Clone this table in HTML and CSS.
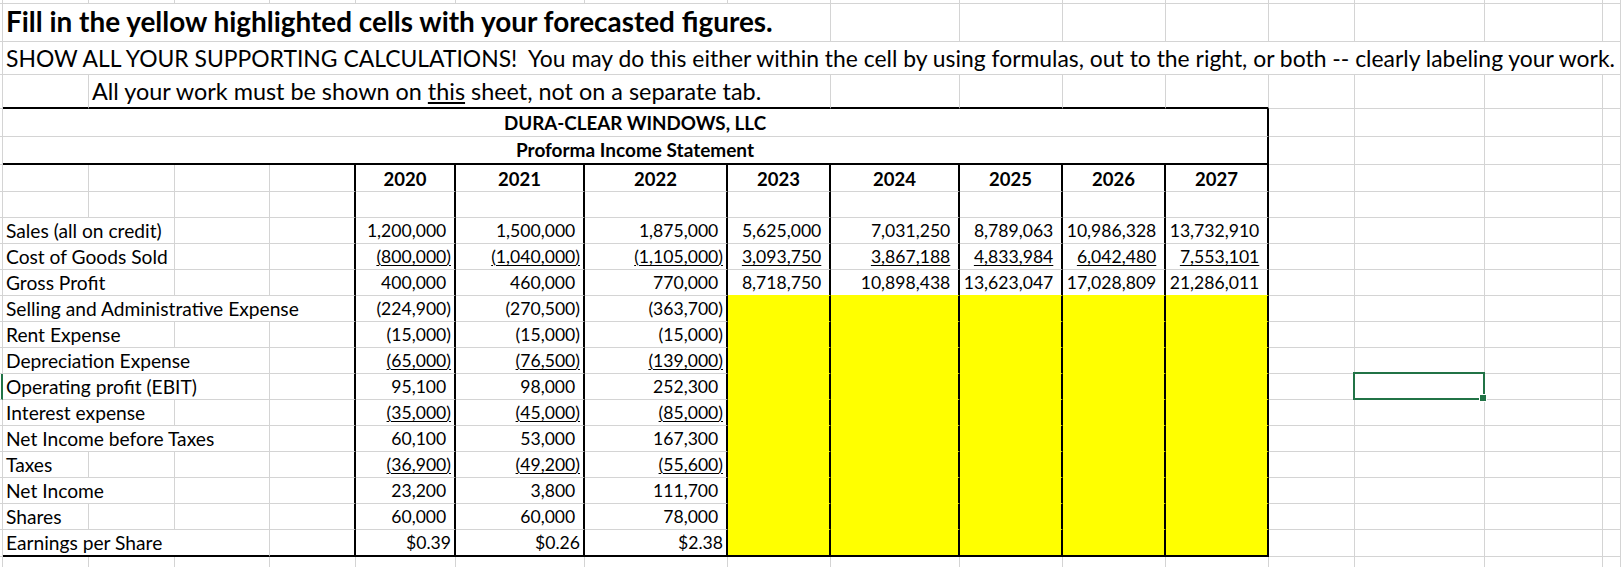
FILE: index.html
```html
<!DOCTYPE html>
<html lang="en">
<head>
<meta charset="utf-8">
<title>Dura-Clear Windows – Proforma Income Statement</title>
<link rel="stylesheet" href="styles.css">
</head>
<body>
<div class="sheet">
  <!-- row 0 (sliver) -->
  <div class="c pre"></div><div class="c"></div><div class="c"></div><div class="c"></div><div class="c"></div><div class="c"></div><div class="c"></div><div class="c"></div><div class="c"></div><div class="c"></div><div class="c"></div><div class="c"></div><div class="c"></div><div class="c"></div><div class="c"></div><div class="c"></div><div class="c"></div>

  <!-- row 1 -->
  <div class="c pre"></div>
  <div class="c s8 title"><span>Fill in the yellow highlighted cells with your forecasted figures.</span></div>
  <div class="c"></div><div class="c"></div><div class="c"></div><div class="c"></div><div class="c"></div><div class="c"></div><div class="c"></div><div class="c"></div>

  <!-- row 2 -->
  <div class="c pre"></div>
  <div class="c s16 note"><span>SHOW ALL YOUR SUPPORTING CALCULATIONS!&nbsp; You may do this either within the cell by using formulas, out to the right, or both -- clearly labeling your work.</span></div>

  <!-- row 3 -->
  <div class="c pre"></div>
  <div class="c tb"></div>
  <div class="c s7 tb note note2"><span>All your work must be shown on <span class="u thick">this</span> sheet, not on a separate tab.</span></div>
  <div class="c tb"></div><div class="c tb"></div><div class="c tb"></div><div class="c tb"></div>
  <div class="c"></div><div class="c"></div><div class="c"></div><div class="c"></div>

  <!-- row 4 -->
  <div class="c pre"></div>
  <div class="c s12 tr m co"><span>DURA-CLEAR WINDOWS, LLC</span></div>
  <div class="c"></div><div class="c"></div><div class="c"></div><div class="c"></div>

  <!-- row 5 -->
  <div class="c pre"></div>
  <div class="c s12 tr tb m sub"><span>Proforma Income Statement</span></div>
  <div class="c"></div><div class="c"></div><div class="c"></div><div class="c"></div>

  <!-- row 6: years -->
  <div class="c pre"></div>
  <div class="c"></div><div class="c"></div><div class="c"></div><div class="c tr"></div>
  <div class="c tr m yr"><span>2020</span></div>
  <div class="c tr m yr"><span>2021</span></div>
  <div class="c tr m yr"><span>2022</span></div>
  <div class="c tr m yr"><span>2023</span></div>
  <div class="c tr m yr"><span>2024</span></div>
  <div class="c tr m yr"><span>2025</span></div>
  <div class="c tr m yr"><span>2026</span></div>
  <div class="c tr m yr"><span>2027</span></div>
  <div class="c"></div><div class="c"></div><div class="c"></div><div class="c"></div>

  <!-- row 7: blank -->
  <div class="c pre"></div>
  <div class="c"></div><div class="c"></div><div class="c"></div><div class="c tr"></div>
  <div class="c tr"></div><div class="c tr"></div><div class="c tr"></div><div class="c tr"></div><div class="c tr"></div><div class="c tr"></div><div class="c tr"></div><div class="c tr"></div>
  <div class="c"></div><div class="c"></div><div class="c"></div><div class="c"></div>

  <!-- Sales -->
  <div class="c pre"></div>
  <div class="c s2"><span>Sales (all on credit)</span></div><div class="c"></div><div class="c tr"></div>
  <div class="c tr r p"><span>1,200,000</span></div>
  <div class="c tr r p"><span>1,500,000</span></div>
  <div class="c tr r p"><span>1,875,000</span></div>
  <div class="c tr r p"><span>5,625,000</span></div>
  <div class="c tr r p"><span>7,031,250</span></div>
  <div class="c tr r p"><span>8,789,063</span></div>
  <div class="c tr r p"><span>10,986,328</span></div>
  <div class="c tr r p"><span>13,732,910</span></div>
  <div class="c"></div><div class="c"></div><div class="c"></div><div class="c"></div>

  <!-- Cost of Goods Sold -->
  <div class="c pre"></div>
  <div class="c s2"><span>Cost of Goods Sold</span></div><div class="c"></div><div class="c tr"></div>
  <div class="c tr r"><span class="u">(800,000)</span></div>
  <div class="c tr r"><span class="u">(1,040,000)</span></div>
  <div class="c tr r"><span class="u">(1,105,000)</span></div>
  <div class="c tr r p"><span class="u">3,093,750</span></div>
  <div class="c tr r p"><span class="u">3,867,188</span></div>
  <div class="c tr r p"><span class="u">4,833,984</span></div>
  <div class="c tr r p"><span class="u">6,042,480</span></div>
  <div class="c tr r p"><span class="u">7,553,101</span></div>
  <div class="c"></div><div class="c"></div><div class="c"></div><div class="c"></div>

  <!-- Gross Profit -->
  <div class="c pre"></div>
  <div class="c s2"><span>Gross Profit</span></div><div class="c"></div><div class="c tr"></div>
  <div class="c tr r p"><span>400,000</span></div>
  <div class="c tr r p"><span>460,000</span></div>
  <div class="c tr r p"><span>770,000</span></div>
  <div class="c tr r p yb"><span>8,718,750</span></div>
  <div class="c tr r p yb"><span>10,898,438</span></div>
  <div class="c tr r p yb"><span>13,623,047</span></div>
  <div class="c tr r p yb"><span>17,028,809</span></div>
  <div class="c tr r p yb"><span>21,286,011</span></div>
  <div class="c"></div><div class="c"></div><div class="c"></div><div class="c"></div>

  <!-- Selling and Administrative Expense -->
  <div class="c pre"></div>
  <div class="c s4 tr"><span>Selling and Administrative Expense</span></div>
  <div class="c tr r"><span>(224,900)</span></div>
  <div class="c tr r"><span>(270,500)</span></div>
  <div class="c tr r"><span>(363,700)</span></div>
  <div class="c tr y"></div><div class="c tr y"></div><div class="c tr y"></div><div class="c tr y"></div><div class="c tr y"></div>
  <div class="c"></div><div class="c"></div><div class="c"></div><div class="c"></div>

  <!-- Rent Expense -->
  <div class="c pre"></div>
  <div class="c s2"><span>Rent Expense</span></div><div class="c"></div><div class="c tr"></div>
  <div class="c tr r"><span>(15,000)</span></div>
  <div class="c tr r"><span>(15,000)</span></div>
  <div class="c tr r"><span>(15,000)</span></div>
  <div class="c tr y"></div><div class="c tr y"></div><div class="c tr y"></div><div class="c tr y"></div><div class="c tr y"></div>
  <div class="c"></div><div class="c"></div><div class="c"></div><div class="c"></div>

  <!-- Depreciation Expense -->
  <div class="c pre"></div>
  <div class="c s3"><span>Depreciation Expense</span></div><div class="c tr"></div>
  <div class="c tr r"><span class="u">(65,000)</span></div>
  <div class="c tr r"><span class="u">(76,500)</span></div>
  <div class="c tr r"><span class="u">(139,000)</span></div>
  <div class="c tr y"></div><div class="c tr y"></div><div class="c tr y"></div><div class="c tr y"></div><div class="c tr y"></div>
  <div class="c"></div><div class="c"></div><div class="c"></div><div class="c"></div>

  <!-- Operating profit (EBIT) -->
  <div class="c pre active"></div>
  <div class="c s3"><span>Operating profit (EBIT)</span></div><div class="c tr"></div>
  <div class="c tr r p"><span>95,100</span></div>
  <div class="c tr r p"><span>98,000</span></div>
  <div class="c tr r p"><span>252,300</span></div>
  <div class="c tr y"></div><div class="c tr y"></div><div class="c tr y"></div><div class="c tr y"></div><div class="c tr y"></div>
  <div class="c"></div>
  <div class="c selcell"><div class="sel"></div><div class="handle"></div></div>
  <div class="c"></div><div class="c"></div>

  <!-- Interest expense -->
  <div class="c pre"></div>
  <div class="c s2"><span>Interest expense</span></div><div class="c"></div><div class="c tr"></div>
  <div class="c tr r"><span class="u">(35,000)</span></div>
  <div class="c tr r"><span class="u">(45,000)</span></div>
  <div class="c tr r"><span class="u">(85,000)</span></div>
  <div class="c tr y"></div><div class="c tr y"></div><div class="c tr y"></div><div class="c tr y"></div><div class="c tr y"></div>
  <div class="c"></div><div class="c"></div><div class="c"></div><div class="c"></div>

  <!-- Net Income before Taxes -->
  <div class="c pre"></div>
  <div class="c s3"><span>Net Income before Taxes</span></div><div class="c tr"></div>
  <div class="c tr r p"><span>60,100</span></div>
  <div class="c tr r p"><span>53,000</span></div>
  <div class="c tr r p"><span>167,300</span></div>
  <div class="c tr y"></div><div class="c tr y"></div><div class="c tr y"></div><div class="c tr y"></div><div class="c tr y"></div>
  <div class="c"></div><div class="c"></div><div class="c"></div><div class="c"></div>

  <!-- Taxes -->
  <div class="c pre"></div>
  <div class="c"><span>Taxes</span></div><div class="c"></div><div class="c"></div><div class="c tr"></div>
  <div class="c tr r"><span class="u">(36,900)</span></div>
  <div class="c tr r"><span class="u">(49,200)</span></div>
  <div class="c tr r"><span class="u">(55,600)</span></div>
  <div class="c tr y"></div><div class="c tr y"></div><div class="c tr y"></div><div class="c tr y"></div><div class="c tr y"></div>
  <div class="c"></div><div class="c"></div><div class="c"></div><div class="c"></div>

  <!-- Net Income -->
  <div class="c pre"></div>
  <div class="c s2"><span>Net Income</span></div><div class="c"></div><div class="c tr"></div>
  <div class="c tr r p"><span>23,200</span></div>
  <div class="c tr r p"><span>3,800</span></div>
  <div class="c tr r p"><span>111,700</span></div>
  <div class="c tr y"></div><div class="c tr y"></div><div class="c tr y"></div><div class="c tr y"></div><div class="c tr y"></div>
  <div class="c"></div><div class="c"></div><div class="c"></div><div class="c"></div>

  <!-- Shares -->
  <div class="c pre"></div>
  <div class="c"><span>Shares</span></div><div class="c"></div><div class="c"></div><div class="c tr"></div>
  <div class="c tr r p"><span>60,000</span></div>
  <div class="c tr r p"><span>60,000</span></div>
  <div class="c tr r p"><span>78,000</span></div>
  <div class="c tr y"></div><div class="c tr y"></div><div class="c tr y"></div><div class="c tr y"></div><div class="c tr y"></div>
  <div class="c"></div><div class="c"></div><div class="c"></div><div class="c"></div>

  <!-- Earnings per Share -->
  <div class="c pre"></div>
  <div class="c s3 tb"><span>Earnings per Share</span></div><div class="c tr tb"></div>
  <div class="c tr tb r"><span>$0.39</span></div>
  <div class="c tr tb r"><span>$0.26</span></div>
  <div class="c tr tb r"><span>$2.38</span></div>
  <div class="c tr y tb"></div><div class="c tr y tb"></div><div class="c tr y tb"></div><div class="c tr y tb"></div><div class="c tr y tb"></div>
  <div class="c"></div><div class="c"></div><div class="c"></div><div class="c"></div>

  <!-- row below -->
  <div class="c pre"></div><div class="c"></div><div class="c"></div><div class="c"></div><div class="c"></div><div class="c"></div><div class="c"></div><div class="c"></div><div class="c"></div><div class="c"></div><div class="c"></div><div class="c"></div><div class="c"></div><div class="c"></div><div class="c"></div><div class="c"></div><div class="c"></div>
</div>
</body>
</html>
```

FILE: styles.css
```css
html, body {
  margin: 0;
  padding: 0;
  overflow: hidden;
  background: #ffffff;
}

body {
  font-family: "Lato", "Carlito", "Liberation Sans", sans-serif;
  color: #000000;
}

.sheet {
  display: grid;
  grid-template-columns: 3px 86px 86px 95px 86px 100px 129px 143px 103px 129px 103px 103px 103px 86px 130px 118px 18px;
  grid-template-rows: 4px 38px 33px 34px 28px 28px 27px 26px 26px 26px 26px 26px 26px 26px 26px 26px 26px 26px 26px 26px 27px 26px;
}

.c {
  box-sizing: border-box;
  min-width: 0;
  display: flex;
  align-items: flex-end;
  white-space: nowrap;
  border-right: 1px solid #d4d4d4;
  border-bottom: 1px solid #d4d4d4;
  padding: 0 3px 2px 3px;
  font-size: 19.2px;
  line-height: 20px;
}

.pre { padding: 0; }
.pre.active { border-right: 2px solid #217346; }

.s2 { grid-column: span 2; }
.s3 { grid-column: span 3; }
.s4 { grid-column: span 4; }
.s7 { grid-column: span 7; }
.s8 { grid-column: span 8; }
.s12 { grid-column: span 12; }
.s16 { grid-column: span 16; }

.title {
  font-size: 27.9px;
  font-weight: 700;
  line-height: 30px;
  padding-bottom: 5px;
}

.note {
  font-size: 22.9px;
  line-height: 26px;
  padding-bottom: 3px;
}
.note2 { font-size: 23.4px; }

.co {
  font-size: 18.8px;
  font-weight: 700;
  line-height: 22px;
  padding-bottom: 2px;
}

.sub {
  font-size: 19px;
  font-weight: 700;
  line-height: 20px;
  padding-bottom: 3px;
}

.yr {
  font-size: 18.5px;
  font-weight: 700;
  padding-bottom: 2px;
}

.m { justify-content: center; }
.r {
  justify-content: flex-end;
  font-size: 17.6px;
}

.p::after {
  content: ")";
  visibility: hidden;
}

.u {
  text-decoration: underline;
  text-decoration-thickness: 1px;
  text-underline-offset: 2px;
}
.u.thick { text-decoration-thickness: 2px; }

.y {
  background: #ffff00;
  border-bottom-color: #ffff00;
}
.yb { border-bottom-color: #ffff00; }

.tr { border-right: 2px solid #000000; }
.tb { border-bottom: 2px solid #000000; }

.selcell { position: relative; }
.sel {
  position: absolute;
  left: -2px;
  top: -2px;
  right: -1px;
  bottom: -1px;
  border: 2px solid #217346;
}
.handle {
  position: absolute;
  left: 124px;
  top: 20px;
  width: 6px;
  height: 6px;
  background: #217346;
  border: 1px solid #ffffff;
}
```
